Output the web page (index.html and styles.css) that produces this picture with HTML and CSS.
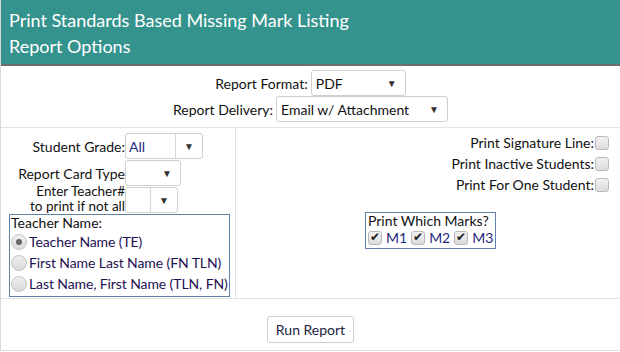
FILE: index.html
```html
<!DOCTYPE html>
<html lang="en">
<head>
    <meta charset="UTF-8">
    <title>Print Standards Based Missing Mark Listing</title>
    <link rel="stylesheet" href="styles.css">
</head>
<body>
    <div class="page">
        <div class="header">
            <div>Print Standards Based Missing Mark Listing</div>
            <div>Report Options</div>
        </div>

        <div class="section top">
            <div class="row center">
                <label>Report Format:</label>
                <span class="sel w-format"><select><option>PDF</option></select><span class="arrow">▼</span></span>
            </div>
            <div class="row center">
                <label>Report Delivery:</label>
                <span class="sel w-delivery"><select><option>Email w/ Attachment</option></select><span class="arrow">▼</span></span>
            </div>
        </div>

        <div class="section middle">
            <div class="col left">
                <div class="row">
                    <label class="lbl">Student Grade:</label>
                    <span class="sel split w-grade"><select><option>All</option></select><span class="arrow">▼</span></span>
                </div>
                <div class="row">
                    <label class="lbl">Report Card Type</label>
                    <span class="sel w-type"><select><option></option></select><span class="arrow">▼</span></span>
                </div>
                <div class="row">
                    <label class="lbl two">Enter Teacher#<br>to print if not all</label>
                    <span class="sel split w-teacher"><select><option></option></select><span class="arrow">▼</span></span>
                </div>
                <div class="box names">
                    <div class="box-title">Teacher Name:</div>
                    <label class="radio"><input type="radio" name="tn" checked> Teacher Name (TE)</label>
                    <label class="radio"><input type="radio" name="tn"> First Name Last Name (FN TLN)</label>
                    <label class="radio"><input type="radio" name="tn"> Last Name, First Name (TLN, FN)</label>
                </div>
            </div>
            <div class="col right">
                <div class="checks">
                    <label class="check">Print Signature Line:<input type="checkbox"></label>
                    <label class="check">Print Inactive Students:<input type="checkbox"></label>
                    <label class="check">Print For One Student:<input type="checkbox"></label>
                </div>
                <div class="box marks">
                    <div class="box-title">Print Which Marks?</div>
                    <div class="mark-list">
                        <label><input type="checkbox" checked> M1</label>
                        <label><input type="checkbox" checked> M2</label>
                        <label><input type="checkbox" checked> M3</label>
                    </div>
                </div>
            </div>
        </div>

        <div class="section bottom">
            <button class="run">Run Report</button>
        </div>
    </div>
</body>
</html>
```

FILE: styles.css
```css
body {
    margin: 0;
    background: #fff;
    font-family: "Lato", "Noto Sans", sans-serif;
    font-size: 14px;
    color: #111;
}
.page {
    width: 619px;
    border-left: 1px solid #d8d8d8;
    border-bottom: 1px solid #e0e0e0;
}
.header {
    background: #35938d;
    color: #fff;
    font-size: 18px;
    line-height: 26px;
    padding: 7px 8px 5px;
    height: 52px;
    border-bottom: 2px solid #6e6e6e;
}
.section {
    border-bottom: 1px solid #e2e2e2;
}
.top {
    padding: 4px 0 5px;
    height: 52px;
}
.row {
    display: flex;
    align-items: center;
    gap: 3px;
}
.row.center {
    justify-content: center;
    height: 26px;
}
.sel {
    display: inline-flex;
    align-items: center;
    height: 26px;
    border: 1px solid #cfcfcf;
    border-radius: 3px;
    background: #fff;
    box-sizing: border-box;
}
.sel select {
    appearance: none;
    -webkit-appearance: none;
    border: none;
    background: transparent;
    font-family: inherit;
    font-size: 14px;
    color: #111;
    padding: 0 4px;
    flex: 1;
    min-width: 0;
    outline: none;
}
.sel .arrow {
    font-size: 10px;
    color: #333;
    padding: 0 8px;
}
.sel.split .arrow {
    border-left: 1px solid #d6d6d6;
    height: 100%;
    display: flex;
    align-items: center;
}
.w-format { width: 95px; }
.w-delivery { width: 172px; }
.w-grade { width: 78px; }
.w-type { width: 56px; }
.w-teacher { width: 53px; }
.w-grade select { color: #1d2a8a; padding-left: 3px; }
.middle {
    display: flex;
    height: 170px;
}
.col.left {
    width: 235px;
    border-right: 1px solid #e2e2e2;
    padding-top: 5px;
    box-sizing: border-box;
}
.col.left .row {
    height: 26px;
    margin-bottom: 1px;
}
.lbl {
    width: 124px;
    text-align: right;
    margin-right: -3px;
    white-space: nowrap;
}
.lbl.two {
    font-size: 13.5px;
    line-height: 15px;
    margin-top: -3px;
    margin-bottom: -1px;
}
.box {
    border: 1px solid #5f80a8;
    white-space: nowrap;
}
.box-title {
    line-height: 16px;
}
.names {
    width: 218px;
    margin: 1px 0 0 8px;
    padding: 0 0 2px 1px;
}
.radio {
    display: flex;
    align-items: center;
    gap: 2px;
    height: 21px;
    color: #231050;
    letter-spacing: -0.1px;
}
.radio input {
    appearance: none;
    -webkit-appearance: none;
    flex-shrink: 0;
    margin: 0;
    width: 16px;
    height: 16px;
    border-radius: 50%;
    border: 1px solid #c4c4c4;
    background: linear-gradient(#f0f0f0, #d9d9d9);
    position: relative;
}
.radio input:checked::after {
    content: "";
    position: absolute;
    left: 4px;
    top: 4px;
    width: 6px;
    height: 6px;
    border-radius: 50%;
    background: #666;
}
.col.right {
    flex: 1;
    padding-top: 4px;
}
.checks {
    display: flex;
    flex-direction: column;
    align-items: flex-end;
    padding-right: 11px;
}
.check {
    display: flex;
    align-items: center;
    height: 21px;
    gap: 1px;
}
input[type="checkbox"] {
    appearance: none;
    -webkit-appearance: none;
    flex-shrink: 0;
    margin: 0;
    width: 14px;
    height: 14px;
    border: 1px solid #b9b9b9;
    border-radius: 3px;
    background: linear-gradient(#f2f2f2, #dcdcdc);
    position: relative;
    box-sizing: border-box;
}
input[type="checkbox"]:checked::after {
    content: "✔";
    position: absolute;
    left: 1px;
    top: -2px;
    font-size: 12px;
    color: #222;
}
.marks {
    display: inline-block;
    margin: 17px 0 0 129px;
    padding: 0 2px 2px 2px;
}
.mark-list {
    display: flex;
    gap: 4px;
}
.mark-list label {
    display: flex;
    align-items: center;
    gap: 4px;
    color: #1f2a7a;
}
.bottom {
    height: 51px;
    display: flex;
    justify-content: center;
    align-items: center;
    border-bottom: none;
}
.run {
    font-family: inherit;
    font-size: 14px;
    color: #1a2340;
    background: #fff;
    border: 1px solid #cfcfcf;
    border-radius: 3px;
    height: 27px;
    padding: 0 8px;
    margin-top: 10px;
}
```
